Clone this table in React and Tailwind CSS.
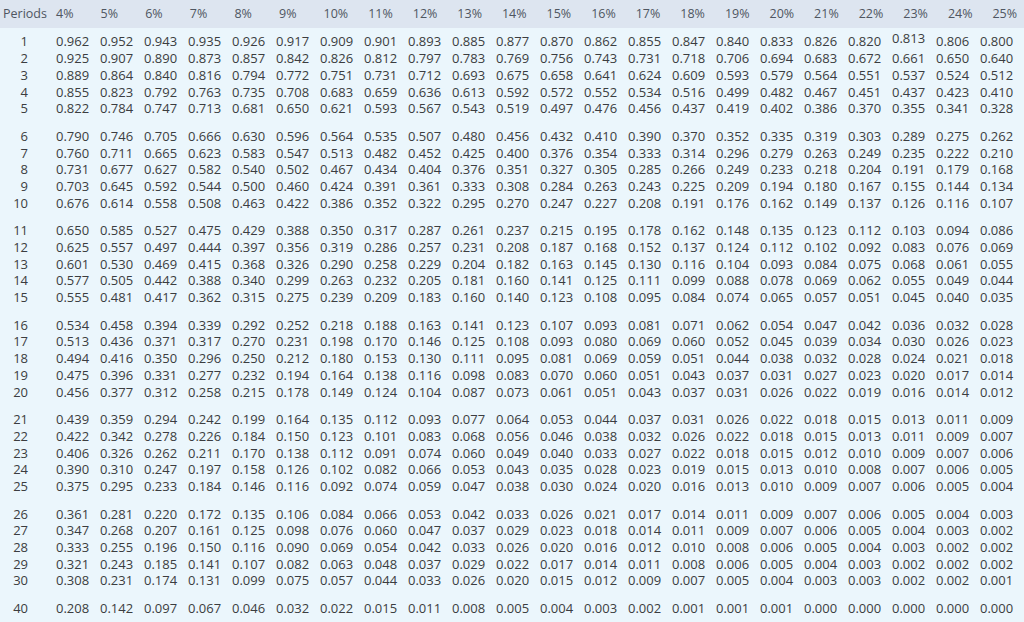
import React from 'react';

// present value of $1 table, 4% .. 25%
const rates = Array.from({ length: 22 }, (_, i) => i + 4);

const groups = [
  [1, 2, 3, 4, 5],
  [6, 7, 8, 9, 10],
  [11, 12, 13, 14, 15],
  [16, 17, 18, 19, 20],
  [21, 22, 23, 24, 25],
  [26, 27, 28, 29, 30],
  [40]
];

const pv = (rate, n) => (1 / Math.pow(1 + rate / 100, n)).toFixed(3);

function Row({ n }) {
  return (
    <div className="grid grid-cols-[56px_repeat(22,44px)] h-[16.7px] items-center">
      <div className="text-right pr-[28px]">{n}</div>
      {rates.map((r) => (
        <div key={r} className="pl-[0px] whitespace-nowrap">
          {n === 1 && r === 23 ? (
            <span className="relative -top-[3px]">{pv(r, n)}</span>
          ) : (
            pv(r, n)
          )}
        </div>
      ))}
    </div>
  );
}

export default function App() {
  return (
    <div
      className="w-[1024px] h-[622px] overflow-hidden bg-[#ebf6fc] text-[#3b3d40]"
      style={{ fontFamily: '"Open Sans", "Liberation Sans", sans-serif' }}
    >
      <div className="h-[28px] bg-[#dde5f0] grid grid-cols-[56px_repeat(21,44.6px)_1fr] items-center text-[12.5px] text-[#4f5661]">
        <div className="pl-[3px]">Periods</div>
        {rates.map((r) => (
          <div key={r}>{r}%</div>
        ))}
      </div>

      <div className="pt-[5.6px] text-[13px] leading-none">
        {groups.map((g, gi) => (
          <div key={gi} className={gi > 0 ? 'pt-[11px]' : ''}>
            {g.map((n) => (
              <Row key={n} n={n} />
            ))}
          </div>
        ))}
      </div>
    </div>
  );
}
